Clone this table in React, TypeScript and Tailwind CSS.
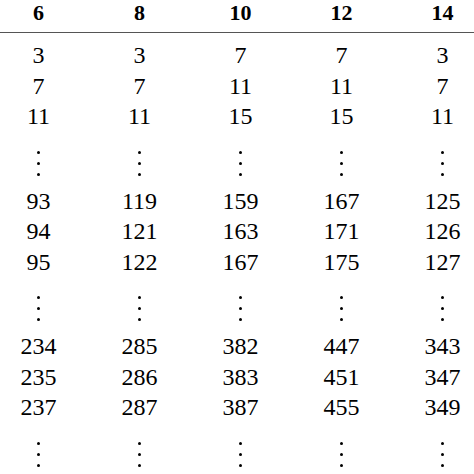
import React from 'react';

const headers = ['6', '8', '10', '12', '14'];

const blocks: string[][][] = [
    [
        ['3', '3', '7', '7', '3'],
        ['7', '7', '11', '11', '7'],
        ['11', '11', '15', '15', '11'],
    ],
    [
        ['93', '119', '159', '167', '125'],
        ['94', '121', '163', '171', '126'],
        ['95', '122', '167', '175', '127'],
    ],
    [
        ['234', '285', '382', '447', '343'],
        ['235', '286', '383', '451', '347'],
        ['237', '287', '387', '455', '349'],
    ],
];

const VDots = () => (
    <div className="flex flex-col items-center gap-[8px] pt-[19px]">
        <span className="w-[3px] h-[3px] rounded-full bg-black" />
        <span className="w-[3px] h-[3px] rounded-full bg-black" />
        <span className="w-[3px] h-[3px] rounded-full bg-black" />
    </div>
);

export default function App() {
    return (
        <div className="w-[474px] h-[474px] overflow-hidden bg-white text-black" style={{ fontFamily: '"Liberation Serif", "Times New Roman", serif' }}>
            {/* header */}
            <div className="border-b-[1.5px] border-[#555] pb-[7px]">
                <div className="grid grid-cols-[repeat(5,101px)] ml-[-12px] text-[22px] leading-[25px] font-bold text-center">
                    {headers.map(h => <div key={h}>{h}</div>)}
                </div>
            </div>

            <div className="pt-[7px] ml-[-12px]">
                {blocks.map((rows, bi) => (
                    <div key={bi}>
                        {rows.map((row, ri) => (
                            <div key={ri} className="grid grid-cols-[repeat(5,101px)] h-[30.5px] text-[24px] leading-[30.5px] text-center">
                                {row.map((v, ci) => <div key={ci}>{v}</div>)}
                            </div>
                        ))}
                        <div className="grid grid-cols-[repeat(5,101px)] h-[54px]">
                            {headers.map(h => <VDots key={h} />)}
                        </div>
                    </div>
                ))}
            </div>
        </div>
    );
}
